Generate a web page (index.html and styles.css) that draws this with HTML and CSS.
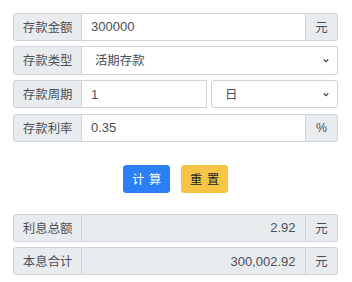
FILE: index.html
```html
<!DOCTYPE html>
<html lang="zh-CN">
<head>
<meta charset="utf-8">
<title>存款计算器</title>
<link rel="stylesheet" href="styles.css">
</head>
<body>
<div class="calc">
  <div class="form">
    <div class="group">
      <span class="label">存款金额</span>
      <input class="field" type="text" value="300000">
      <span class="addon">元</span>
    </div>
    <div class="group">
      <span class="label">存款类型</span>
      <select class="select">
        <option>活期存款</option>
      </select>
    </div>
    <div class="group">
      <span class="label">存款周期</span>
      <input class="field field-mid" type="text" value="1">
      <select class="select select-unit">
        <option>日</option>
      </select>
    </div>
    <div class="group">
      <span class="label">存款利率</span>
      <input class="field" type="text" value="0.35">
      <span class="addon">%</span>
    </div>
  </div>
  <div class="actions">
    <button class="btn btn-primary" type="button">计 算</button>
    <button class="btn btn-warning" type="button">重 置</button>
  </div>
  <div class="form results">
    <div class="group">
      <span class="label">利息总额</span>
      <span class="value">2.92</span>
      <span class="addon">元</span>
    </div>
    <div class="group">
      <span class="label">本息合计</span>
      <span class="value">300,002.92</span>
      <span class="addon">元</span>
    </div>
  </div>
</div>
</body>
</html>
```
FILE: styles.css
```css
* { box-sizing: border-box; }
html, body { margin: 0; padding: 0; background: #fff; }
body {
  font-family: "Liberation Sans", "Noto Sans CJK SC", sans-serif;
  font-size: 12px;
  color: #495057;
}
.calc {
  padding: 12.5px 14px 0 13.3px;
}
.form {
  display: flex;
  flex-direction: column;
  gap: 5.2px;
}
.group {
  display: flex;
  height: 28.5px;
}
.label {
  flex: 0 0 68.7px;
  display: flex;
  align-items: center;
  justify-content: center;
  background: #e9ecef;
  border: 1px solid #ced4da;
  border-radius: 3px 0 0 3px;
  color: #495057;
  font-family: "Noto Sans CJK SC", sans-serif;
  font-size: 12.4px;
}
.field {
  flex: 1 1 auto;
  min-width: 0;
  height: 100%;
  margin: 0;
  border: 1px solid #ced4da;
  border-left: 0;
  background: #fff;
  color: #495057;
  font-family: "Liberation Sans", "Noto Sans CJK SC", sans-serif;
  font-size: 13px;
  padding: 0 9px;
  outline: none;
}
.field-mid {
  flex: 0 0 125.3px;
  border-right: 1px solid #ced4da;
}
.addon {
  flex: 0 0 32px;
  display: flex;
  align-items: center;
  justify-content: center;
  background: #e9ecef;
  border: 1px solid #ced4da;
  border-left: 0;
  border-radius: 0 3px 3px 0;
  color: #495057;
  font-family: "Liberation Sans", "Noto Sans CJK SC", sans-serif;
  font-size: 12.4px;
}
.select {
  flex: 1 1 auto;
  min-width: 0;
  height: 100%;
  margin: 0;
  -webkit-appearance: none;
  appearance: none;
  border: 1px solid #ced4da;
  border-left: 0;
  border-radius: 0 3px 3px 0;
  background-color: #fff;
  background-image: url("data:image/svg+xml,%3csvg xmlns='http://www.w3.org/2000/svg' width='8' height='6' viewBox='0 0 8 6'%3e%3cpath fill='none' stroke='%23343a40' stroke-width='1.6' d='M1 1.5l3 3 3-3'/%3e%3c/svg%3e");
  background-repeat: no-repeat;
  background-position: right 8px center;
  background-size: 6px 5px;
  color: #495057;
  font-family: "Noto Sans CJK SC", sans-serif;
  font-size: 12.4px;
  padding: 0 20px 0 13px;
  outline: none;
}
.select-unit {
  margin-left: 3.7px;
  border-left: 1px solid #ced4da;
  border-radius: 3px;
}
.actions {
  display: flex;
  justify-content: center;
  gap: 10.4px;
  margin: 22.8px 0 20.5px;
}
.btn {
  height: 28.5px;
  width: 47.5px;
  border: 1px solid transparent;
  border-radius: 3px;
  font-family: "Noto Sans CJK SC", sans-serif;
  font-size: 12.2px;
  word-spacing: 2px;
  padding: 0;
  cursor: pointer;
}
.btn-primary {
  background: #2c80f7;
  border-color: #2c80f7;
  color: #fff;
}
.btn-warning {
  background: #f7c546;
  border-color: #f7c546;
  color: #212529;
}
.results .group {
  height: 28px;
}
.results {
  gap: 5.5px;
}
.value {
  flex: 1 1 auto;
  display: flex;
  align-items: center;
  justify-content: flex-end;
  background: #e9ecef;
  border: 1px solid #ced4da;
  border-left: 0;
  padding: 0 9.5px;
  color: #495057;
  font-size: 13px;
}
```
